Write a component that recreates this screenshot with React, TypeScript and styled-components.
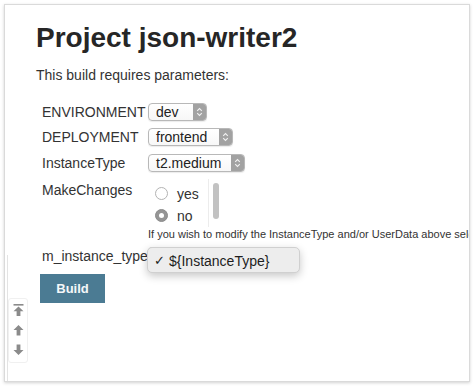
import React from 'react';
import styled, { createGlobalStyle } from 'styled-components';

const GlobalStyle = createGlobalStyle`
  html, body {
    margin: 0;
    padding: 0;
    background: #fff;
  }
  body {
    font-family: "Liberation Sans", Arial, Helvetica, sans-serif;
    color: #333;
  }
`;

const Frame = styled.div`
  box-sizing: border-box;
  position: relative;
  margin: 4px;
  width: 466px;
  height: 378px;
  border: 1px solid #dadada;
  box-shadow: 0 1px 3px rgba(0, 0, 0, 0.18);
  background: #fff;
  overflow: hidden;
`;

const Content = styled.div`
  padding: 17px 0 0 31px;
`;

const Title = styled.h1`
  margin: 0;
  font-size: 28px;
  line-height: 32px;
  font-weight: bold;
  color: #262626;
`;

const Intro = styled.p`
  margin: 12px 0 0;
  font-size: 14px;
  line-height: 18px;
`;

const Params = styled.div`
  display: grid;
  grid-template-columns: 106px auto;
  margin: 15px 0 0 6px;
`;

const Label = styled.div<{ $top?: boolean }>`
  display: flex;
  align-items: ${({ $top }) => ($top ? 'flex-start' : 'center')};
  padding-top: ${({ $top }) => ($top ? '5px' : '0')};
  height: ${({ $top }) => ($top ? 'auto' : '25.5px')};
  font-size: 14px;
  line-height: 18px;
  color: #333;
  white-space: nowrap;
`;

const Value = styled.div<{ $top?: boolean }>`
  position: relative;
  display: flex;
  flex-direction: column;
  justify-content: ${({ $top }) => ($top ? 'flex-start' : 'center')};
  min-height: 25.5px;
`;

const SelectBox = styled.div<{ $width: number }>`
  box-sizing: border-box;
  display: flex;
  align-items: center;
  width: ${({ $width }) => $width}px;
  height: 18px;
  border: 1px solid #b8b8b8;
  border-radius: 4px;
  background: linear-gradient(#fff, #f7f7f7);
  box-shadow: 0 1px 1px rgba(0, 0, 0, 0.08);
`;

const SelectText = styled.span`
  flex: 1;
  padding-left: 7px;
  font-size: 14px;
  line-height: 16px;
  color: #222;
  white-space: nowrap;
`;

const Stepper = styled.span`
  display: flex;
  align-items: center;
  justify-content: center;
  width: 13px;
  height: 16px;
  border-radius: 0 3px 3px 0;
  background: #a2a2a2;
`;

const StepperIcon = () => (
  <svg width="7" height="10" viewBox="0 0 7 10">
    <path d="M1.2 3.8 L3.5 1.6 L5.8 3.8 M1.2 6.2 L3.5 8.4 L5.8 6.2" fill="none" stroke="#f2f2f2" strokeWidth="1.1" />
  </svg>
);

const Select = ({ value, width }: { value?: string; width: number }) => (
  <SelectBox $width={width}>
    <SelectText>{value}</SelectText>
    <Stepper>
      <StepperIcon />
    </Stepper>
  </SelectBox>
);

const RadioBox = styled.div`
  display: flex;
  width: 75px;
  height: 48px;
  margin-top: 3px;
`;

const RadioList = styled.div`
  flex: 1;
  padding: 4px 0 0 7px;
`;

const RadioItem = styled.label`
  display: flex;
  align-items: center;
  gap: 9px;
  height: 22px;
  font-size: 14px;
  color: #333;
`;

const RadioDot = styled.span<{ $checked?: boolean }>`
  box-sizing: border-box;
  display: flex;
  align-items: center;
  justify-content: center;
  width: 13px;
  height: 13px;
  border-radius: 50%;
  border: 1px solid ${({ $checked }) => ($checked ? '#8c8c8c' : '#b3b3b3')};
  background: ${({ $checked }) => ($checked ? '#959595' : '#fff')};

  &::after {
    content: '';
    display: ${({ $checked }) => ($checked ? 'block' : 'none')};
    width: 5px;
    height: 5px;
    border-radius: 50%;
    background: #fff;
  }
`;

const ScrollTrack = styled.div`
  display: flex;
  justify-content: center;
  width: 14px;
  padding-top: 4px;
  border-left: 1px solid #ececec;
`;

const ScrollThumb = styled.div`
  width: 6px;
  height: 36px;
  border-radius: 3px;
  background: #c2c2c2;
`;

const Hint = styled.div`
  font-size: 11px;
  line-height: 14px;
  color: #333;
  white-space: nowrap;
`;

const Gap = styled.div`
  grid-column: 1 / -1;
  height: 3px;
`;

const Popup = styled.div`
  position: absolute;
  left: -1px;
  top: 3px;
  box-sizing: border-box;
  width: 153px;
  height: 26px;
  display: flex;
  align-items: center;
  padding: 2px 0 0 6px;
  border: 1px solid #d0d0d0;
  border-radius: 5px;
  background: #ededed;
  box-shadow: 0 3px 8px rgba(0, 0, 0, 0.22);
  font-size: 14px;
  color: #1e1e1e;
  white-space: nowrap;
`;

const Check = styled.span`
  margin-right: 4px;
  font-size: 13px;
`;

const BuildButton = styled.button`
  margin: 5px 0 0 4px;
  width: 65px;
  height: 29px;
  border: none;
  background: #4b7b93;
  color: #f4f7f9;
  font-family: "Liberation Sans", Arial, sans-serif;
  font-size: 13px;
  font-weight: bold;
`;

const Dock = styled.div`
  position: absolute;
  left: 2px;
  top: 250px;
  bottom: 0;
  border-left: 1px solid #e3e3e3;
`;

const DockBox = styled.div`
  display: flex;
  flex-direction: column;
  align-items: center;
  gap: 8px;
  margin: 43px 0 0 0;
  padding: 5px 0 6px;
  width: 18px;
  border: 1px solid #f0f0f0;
  border-radius: 3px;
  background: #fff;
`;

const ArrowIcon = ({ dir, bar }: { dir: 'up' | 'down'; bar?: boolean }) => (
  <svg width="11" height="12" viewBox="0 0 11 12">
    <g fill="#8b8b8b" transform={dir === 'down' ? 'rotate(180 5.5 6)' : undefined}>
      {bar && <rect x="0.5" y="0" width="10" height="1.6" />}
      <path d={bar ? 'M5.5 2.6 L10.5 7.2 L7.4 7.2 L7.4 12 L3.6 12 L3.6 7.2 L0.5 7.2 Z' : 'M5.5 1 L10.5 6 L7.4 6 L7.4 11.5 L3.6 11.5 L3.6 6 L0.5 6 Z'} />
    </g>
  </svg>
);

const params = [
  { name: 'ENVIRONMENT', value: 'dev', width: 59 },
  { name: 'DEPLOYMENT', value: 'frontend', width: 85 },
  { name: 'InstanceType', value: 't2.medium', width: 97 },
];

export default function App() {
  return (
    <>
      <GlobalStyle />
      <Frame>
        <Content>
          <Title>Project json-writer2</Title>
          <Intro>This build requires parameters:</Intro>
          <Params>
            {params.map((p) => (
              <React.Fragment key={p.name}>
                <Label>{p.name}</Label>
                <Value>
                  <Select value={p.value} width={p.width} />
                </Value>
              </React.Fragment>
            ))}
            <Label $top>MakeChanges</Label>
            <Value $top>
              <RadioBox>
                <RadioList>
                  <RadioItem>
                    <RadioDot />
                    yes
                  </RadioItem>
                  <RadioItem>
                    <RadioDot $checked />
                    no
                  </RadioItem>
                </RadioList>
                <ScrollTrack>
                  <ScrollThumb />
                </ScrollTrack>
              </RadioBox>
              <Hint>If you wish to modify the InstanceType and/or UserData above select yes</Hint>
            </Value>
            <Gap />
            <Label>m_instance_type</Label>
            <Value>
              <Select width={133} />
              <Popup>
                <Check>✓</Check>${'{InstanceType}'}
              </Popup>
            </Value>
          </Params>
          <BuildButton>Build</BuildButton>
        </Content>
        <Dock>
          <DockBox>
            <ArrowIcon dir="up" bar />
            <ArrowIcon dir="up" />
            <ArrowIcon dir="down" />
          </DockBox>
        </Dock>
      </Frame>
    </>
  );
}
